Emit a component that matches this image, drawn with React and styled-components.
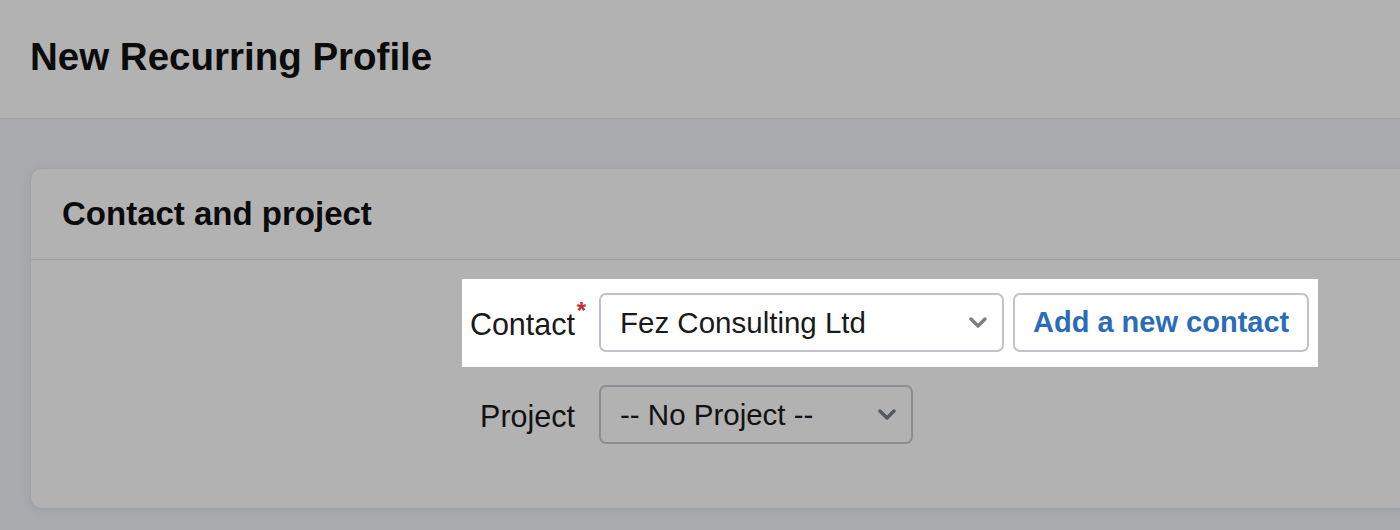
import React from 'react';
import styled, { createGlobalStyle } from 'styled-components';

const GlobalStyle = createGlobalStyle`
    html, body {
        margin: 0;
        padding: 0;
        overflow: hidden;
        background-color: #f1f4fa;
        font-family: 'Liberation Sans', Arial, sans-serif;
        color: #161616;
    }
    * {
        box-sizing: border-box;
    }
`;

const Page = styled.div`
    width: 1400px;
    height: 530px;
    overflow: hidden;
`;

const TopBar = styled.header`
    display: flex;
    align-items: center;
    height: 119px;
    padding-left: 30px;
    background-color: #ffffff;
    border-bottom: 1px solid #e2e2e2;
`;

const Title = styled.h1`
    margin: 0;
    margin-top: -4px;
    font-size: 38.5px;
    font-weight: 700;
    color: #111111;
`;

const Main = styled.main`
    padding: 49px 0 0 30px;
`;

const Card = styled.section`
    width: 1420px;
    background-color: #ffffff;
    border: 1px solid #e8e8e8;
    border-radius: 12px;
    box-shadow: 0 2px 10px rgba(40, 50, 70, 0.08);
`;

const CardHeader = styled.div`
    display: flex;
    align-items: center;
    height: 91px;
    padding-left: 31px;
    border-bottom: 1px solid #e2e2e2;
`;

const CardTitle = styled.h2`
    margin: 0;
    font-size: 33px;
    font-weight: 700;
    color: #111111;
`;

const CardBody = styled.div`
    display: flex;
    flex-direction: column;
    gap: 33px;
    padding: 33px 0 64px;
`;

const Row = styled.div`
    position: relative;
    display: flex;
    align-items: center;
    width: max-content;
`;

const LabelCell = styled.div`
    width: 544px;
    padding-top: 4px;
    text-align: right;
    font-size: 30.5px;
    color: #1a1a1a;
`;

const Label = styled.label`
    position: relative;
`;

const Required = styled.span`
    position: absolute;
    right: -11px;
    top: -10px;
    color: #c42b2b;
    font-size: 24px;
    font-weight: 700;
`;

const Select = styled.div`
    display: flex;
    align-items: center;
    justify-content: space-between;
    width: ${(p) => p.$width}px;
    height: 59px;
    margin-left: 24px;
    padding: 0 15px 0 19px;
    background-color: #ffffff;
    border: 2px solid ${(p) => (p.$muted ? '#c6c9ce' : '#c0c4ca')};
    border-radius: 7px;
    font-size: 29.5px;
    color: #1a1a1a;
`;

const Button = styled.button`
    height: 59px;
    margin-left: 9px;
    padding: 0 18px;
    background-color: #ffffff;
    border: 2px solid #c0c4ca;
    border-radius: 7px;
    font-family: inherit;
    font-size: 29px;
    font-weight: 700;
    color: #2a6cb9;
`;

const Spotlight = styled.div`
    position: absolute;
    top: -14px;
    bottom: -15px;
    left: 431px;
    right: -9px;
    z-index: 10;
    pointer-events: none;
    box-shadow: 0 0 0 3000px rgba(0, 0, 0, 0.3);
`;

const Chevron = () => (
    <svg width='18' height='11' viewBox='0 0 18 11' fill='none'>
        <polyline
            points='2,2 9,9 16,2'
            stroke='#7a8088'
            strokeWidth='3.4'
            strokeLinecap='round'
            strokeLinejoin='round'
        />
    </svg>
);

const App = () => {
    return (
        <Page>
            <GlobalStyle />
            <TopBar>
                <Title>New Recurring Profile</Title>
            </TopBar>
            <Main>
                <Card>
                    <CardHeader>
                        <CardTitle>Contact and project</CardTitle>
                    </CardHeader>
                    <CardBody>
                        <Row>
                            <LabelCell>
                                <Label>
                                    Contact
                                    <Required>*</Required>
                                </Label>
                            </LabelCell>
                            <Select $width={405}>
                                <span>Fez Consulting Ltd</span>
                                <Chevron />
                            </Select>
                            <Button>Add a new contact</Button>
                            <Spotlight />
                        </Row>
                        <Row>
                            <LabelCell>
                                <Label>Project</Label>
                            </LabelCell>
                            <Select $width={314} $muted>
                                <span>-- No Project --</span>
                                <Chevron />
                            </Select>
                        </Row>
                    </CardBody>
                </Card>
            </Main>
        </Page>
    );
};

export default App;
